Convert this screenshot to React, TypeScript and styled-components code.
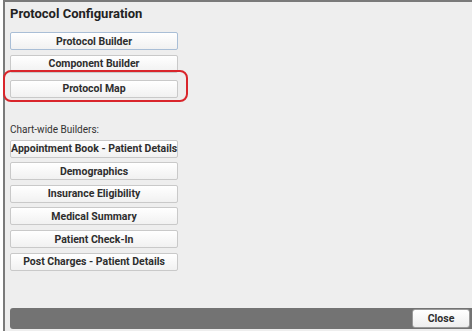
import styled, { createGlobalStyle } from "styled-components";

const GlobalStyle = createGlobalStyle`
  html, body {
    margin: 0;
    padding: 0;
    background: #ffffff;
  }
  body {
    font-family: Roboto, "Liberation Sans", Arial, sans-serif;
  }
`;

const Dialog = styled.div`
  width: 469px;
  height: 331px;
  margin-left: 3px;
  box-sizing: border-box;
  background: #eeeeee;
  border-left: 2px solid #7a7a7a;
  border-top: 2px solid #7a7a7a;
  display: flex;
  flex-direction: column;
`;

const Body = styled.div`
  flex: 1;
  padding: 3px 0 0 5px;
  display: flex;
  flex-direction: column;
`;

const Title = styled.h1`
  margin: 0 0 9px 0;
  font-size: 13px;
  font-weight: 700;
  color: #222;
  line-height: 18px;
`;

const ButtonList = styled.div`
  display: flex;
  flex-direction: column;
  gap: 4.6px;
  width: 168px;
`;

const Highlight = styled.div`
  margin: -7px -10px -4px -7px;
  padding: 5px 8px 2px 5px;
  border: 2px solid #d9252b;
  border-radius: 8px;
`;

const Button = styled.button<{ $focused?: boolean }>`
  width: 168px;
  height: 18px;
  padding: 0;
  box-sizing: border-box;
  border: 1px solid ${(p) => (p.$focused ? "#a9bed6" : "#c9c9c9")};
  border-radius: 2px;
  background: linear-gradient(#ffffff, #f1f1f1);
  font-family: Roboto, "Liberation Sans", Arial, sans-serif;
  font-size: 10.5px;
  font-weight: 700;
  color: #2e2e2e;
  text-align: center;
  white-space: nowrap;
`;

const Section = styled.div`
  margin: 25px 0 4px 0;
  font-size: 10px;
  color: #333;
  line-height: 13px;
`;

const Footer = styled.div`
  height: 21px;
  margin: 0 0 2px 5px;
  background: #737373;
  border-radius: 3px 0 0 3px;
  display: flex;
  justify-content: flex-end;
  align-items: center;
  padding-right: 2px;
`;

const CloseButton = styled.button`
  width: 58px;
  height: 19px;
  padding: 0;
  box-sizing: border-box;
  border: 1px solid #9a9a9a;
  border-radius: 3px;
  background: linear-gradient(#ffffff, #eeeeee);
  font-family: Roboto, "Liberation Sans", Arial, sans-serif;
  font-size: 10.5px;
  font-weight: 700;
  color: #2e2e2e;
`;

const chartWide = [
  "Appointment Book - Patient Details",
  "Demographics",
  "Insurance Eligibility",
  "Medical Summary",
  "Patient Check-In",
  "Post Charges - Patient Details",
];

export default function App() {
  return (
    <>
      <GlobalStyle />
      <Dialog>
        <Body>
          <Title>Protocol Configuration</Title>
          <ButtonList>
            <Button $focused>Protocol Builder</Button>
            <Button>Component Builder</Button>
            <Highlight>
              <Button>Protocol Map</Button>
            </Highlight>
          </ButtonList>
          <Section>Chart-wide Builders:</Section>
          <ButtonList>
            {chartWide.map((label) => (
              <Button key={label}>{label}</Button>
            ))}
          </ButtonList>
        </Body>
        <Footer>
          <CloseButton>Close</CloseButton>
        </Footer>
      </Dialog>
    </>
  );
}
